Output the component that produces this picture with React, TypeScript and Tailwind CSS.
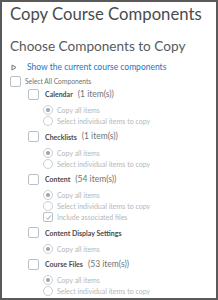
import React from 'react';

type Group = {
  name: string;
  count?: string;
  options: string[];
  includeFiles?: boolean;
};

const groups: Group[] = [
  { name: 'Calendar', count: '(1 item(s))', options: ['Copy all items', 'Select individual items to copy'] },
  { name: 'Checklists', count: '(1 item(s))', options: ['Copy all items', 'Select individual items to copy'] },
  {
    name: 'Content',
    count: '(54 item(s))',
    options: ['Copy all items', 'Select individual items to copy'],
    includeFiles: true,
  },
  { name: 'Content Display Settings', options: ['Copy all items'] },
  { name: 'Course Files', count: '(53 item(s))', options: ['Copy all items', 'Select individual items to copy'] },
];

function Box({ size = 'h-[11px] w-[11px]', checked = false }: { size?: string; checked?: boolean }) {
  return (
    <span className={`${size} flex shrink-0 items-center justify-center rounded-[2px] border border-[#b9c0c7] bg-white`}>
      {checked && (
        <svg width="7" height="7" viewBox="0 0 10 10" fill="none" stroke="#9aa0a6" strokeWidth="1.4" strokeLinecap="round" strokeLinejoin="round">
          <path d="M2 5.5l2 2 4-5" />
        </svg>
      )}
    </span>
  );
}

function Radio({ on }: { on: boolean }) {
  return (
    <span className="flex h-[10px] w-[10px] shrink-0 items-center justify-center rounded-full border border-[#c9cfd4] bg-white">
      {on && <span className="h-[4px] w-[4px] rounded-full bg-[#9ea3a8]" />}
    </span>
  );
}

export default function App() {
  return (
    <div className="h-[300px] w-[218px] overflow-hidden border-2 border-[#5a5a5a] bg-white pl-[8px] font-['Lato',sans-serif]">
      <h1 className="mt-[2px] text-[16.7px] leading-[1.2] text-[#494c4e]">Copy Course Components</h1>
      <h2 className="mt-[14px] text-[13.6px] leading-[1.2] text-[#565a5c]">Choose Components to Copy</h2>

      <div className="mt-[8px] flex h-[11px] items-center">
        <svg width="6" height="7" viewBox="0 0 6 7" className="ml-[1px]">
          <path d="M1 1l4 2.5L1 6z" fill="none" stroke="#6e7376" strokeWidth="1" strokeLinejoin="round" />
        </svg>
        <span className="ml-[10px] text-[8.5px] text-[#1b75c9]">Show the current course components</span>
      </div>

      <div className="mt-[2.5px] flex h-[11px] items-center">
        <Box />
        <span className="ml-[4px] text-[6.7px] text-[#6e7376]">Select All Components</span>
      </div>

      <div className="pl-[18px]">
        {groups.map((g, gi) => (
          <div key={g.name}>
            <div className={`${gi === 0 ? 'mt-[2px]' : 'mt-[4.5px]'} mb-[5px] flex h-[11px] items-center`}>
              <Box />
              <span className="ml-[6px] text-[7px] font-bold text-[#494c4e]">{g.name}</span>
              {g.count && <span className="ml-[5px] text-[8.5px] text-[#6e7376]">{g.count}</span>}
            </div>
            <div className="pl-[15px]">
              {g.options.map((o, i) => (
                <div key={o} className="flex h-[11px] items-center">
                  <Radio on={i === 0} />
                  <span className="ml-[4px] text-[7px] text-[#b4b7ba]">{o}</span>
                </div>
              ))}
              {g.includeFiles && (
                <div className="flex h-[11px] items-center">
                  <Box size="h-[10px] w-[10px]" checked />
                  <span className="ml-[4px] text-[7px] text-[#b4b7ba]">Include associated files</span>
                </div>
              )}
            </div>
          </div>
        ))}
      </div>
    </div>
  );
}
